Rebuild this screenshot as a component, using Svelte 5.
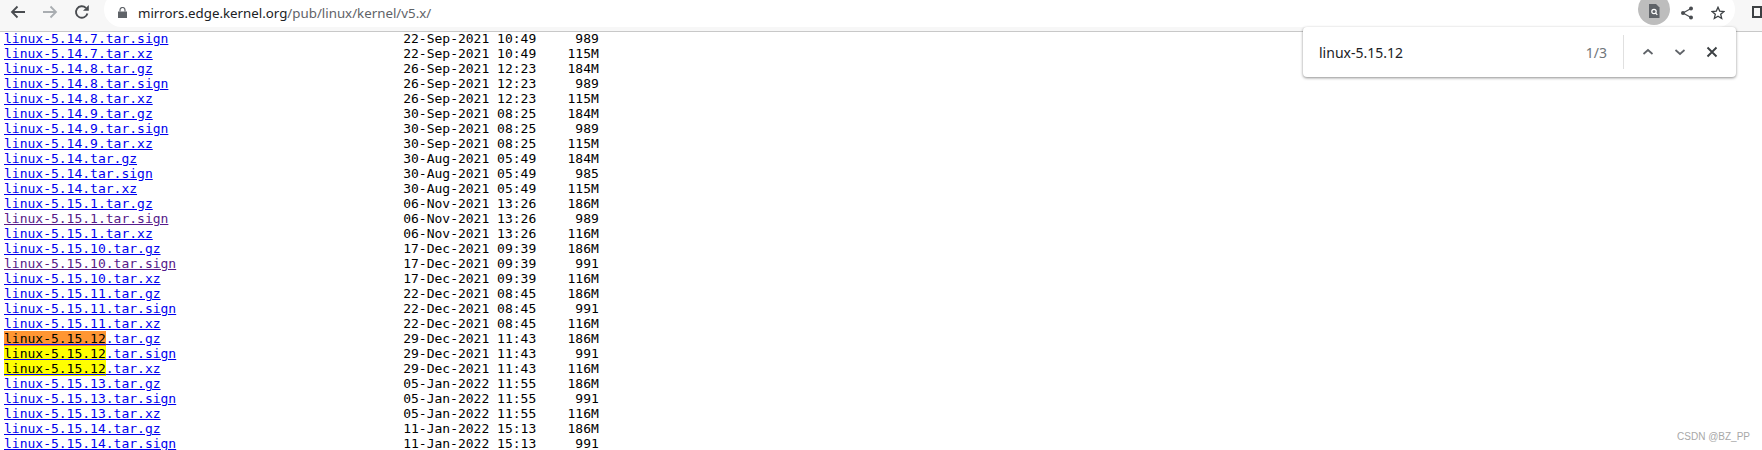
<script>
  // name, date, size — same rows as the nginx index
  const rows = [
    ["linux-5.14.7.tar.sign", "22-Sep-2021 10:49", "989"],
    ["linux-5.14.7.tar.xz", "22-Sep-2021 10:49", "115M"],
    ["linux-5.14.8.tar.gz", "26-Sep-2021 12:23", "184M"],
    ["linux-5.14.8.tar.sign", "26-Sep-2021 12:23", "989"],
    ["linux-5.14.8.tar.xz", "26-Sep-2021 12:23", "115M"],
    ["linux-5.14.9.tar.gz", "30-Sep-2021 08:25", "184M"],
    ["linux-5.14.9.tar.sign", "30-Sep-2021 08:25", "989"],
    ["linux-5.14.9.tar.xz", "30-Sep-2021 08:25", "115M"],
    ["linux-5.14.tar.gz", "30-Aug-2021 05:49", "184M"],
    ["linux-5.14.tar.sign", "30-Aug-2021 05:49", "985"],
    ["linux-5.14.tar.xz", "30-Aug-2021 05:49", "115M"],
    ["linux-5.15.1.tar.gz", "06-Nov-2021 13:26", "186M"],
    ["linux-5.15.1.tar.sign", "06-Nov-2021 13:26", "989"],
    ["linux-5.15.1.tar.xz", "06-Nov-2021 13:26", "116M"],
    ["linux-5.15.10.tar.gz", "17-Dec-2021 09:39", "186M"],
    ["linux-5.15.10.tar.sign", "17-Dec-2021 09:39", "991"],
    ["linux-5.15.10.tar.xz", "17-Dec-2021 09:39", "116M"],
    ["linux-5.15.11.tar.gz", "22-Dec-2021 08:45", "186M"],
    ["linux-5.15.11.tar.sign", "22-Dec-2021 08:45", "991"],
    ["linux-5.15.11.tar.xz", "22-Dec-2021 08:45", "116M"],
    ["linux-5.15.12.tar.gz", "29-Dec-2021 11:43", "186M"],
    ["linux-5.15.12.tar.sign", "29-Dec-2021 11:43", "991"],
    ["linux-5.15.12.tar.xz", "29-Dec-2021 11:43", "116M"],
    ["linux-5.15.13.tar.gz", "05-Jan-2022 11:55", "186M"],
    ["linux-5.15.13.tar.sign", "05-Jan-2022 11:55", "991"],
    ["linux-5.15.13.tar.xz", "05-Jan-2022 11:55", "116M"],
    ["linux-5.15.14.tar.gz", "11-Jan-2022 15:13", "186M"],
    ["linux-5.15.14.tar.sign", "11-Jan-2022 15:13", "991"],
  ];
  const query = "linux-5.15.12";
  const visited = ["linux-5.15.1.tar.sign", "linux-5.15.10.tar.sign"];
  let hitCount = 0;
  function hitIndex(name) {
    return name.startsWith(query) ? hitCount++ : -1;
  }
</script>

<div class="page">
  <header class="toolbar">
    <div class="nav">
      <svg class="icon" viewBox="0 0 16 16"><path d="M15 8H2.500M7.500 2.500 2 8l5.500 5.500" fill="none" stroke="#494c50" stroke-width="1.800"/></svg>
      <svg class="icon" viewBox="0 0 16 16"><path d="M1 8h12.500M8.500 2.500 14 8l-5.500 5.500" fill="none" stroke="#a9adb1" stroke-width="1.800"/></svg>
      <svg class="icon" viewBox="0 0 16 16"><path d="M13.400 9.500a5.800 5.800 0 1 1-1.500-5.600" fill="none" stroke="#494c50" stroke-width="1.900"/><path d="M14.800 1V6.800H9Z" fill="#494c50"/></svg>
    </div>
    <div class="omnibox">
      <svg class="lock" viewBox="0 0 9 11"><path d="M0 4.500h9V11H0Z" fill="#5f6368"/><path d="M2 4.500V3a2.500 2.500 0 0 1 5 0v1.500" fill="none" stroke="#5f6368" stroke-width="1.200"/></svg>
      <span class="url">mirrors.edge.kernel.org<span class="path">/pub/linux/kernel/v5.x/</span></span>
      <div class="actions">
        <span class="find-pill">
          <svg viewBox="0 0 12 14" width="12" height="14"><path d="M1 0h7l3.500 3.500V14H1Z" fill="#5f6368"/><circle cx="6" cy="7.500" r="2.200" fill="none" stroke="#fff" stroke-width="1.200"/><path d="m7.500 9 1.800 1.800" stroke="#fff" stroke-width="1.200"/></svg>
        </span>
        <svg class="action" viewBox="0 0 14 14"><path d="M11 2.500 3 7l8 4.500" fill="none" stroke="#494c50" stroke-width="1.200"/><circle cx="11" cy="2.500" r="2" fill="#494c50"/><circle cx="3" cy="7" r="2" fill="#494c50"/><circle cx="11" cy="11.500" r="2" fill="#494c50"/></svg>
        <svg class="action star" viewBox="0 0 14 14"><path d="m7 1.300 1.700 3.800 4.200.400-3.200 2.800 1 4.200L7 10.300l-3.700 2.200 1-4.200-3.200-2.800 4.200-.400Z" fill="none" stroke="#3c4043" stroke-width="1.300"/></svg>
      </div>
    </div>
    <div class="window-btn"></div>
  </header>

  <pre class="listing">{#each rows as [name, date, size]}{@const hit = hitIndex(name)}<a href="#top" class:visited={visited.includes(name)}>{#if hit >= 0}<mark class:current={hit === 0}>{query}</mark>{name.slice(query.length)}{:else}{name}{/if}</a>{" ".repeat(51 - name.length)}{date}{size.padStart(8)}{"\n"}{/each}</pre>

  <div class="findbar">
    <span class="query">{query}</span>
    <span class="count">1/3</span>
    <span class="divider"></span>
    <div class="find-btns">
      <svg class="find-btn" viewBox="0 0 12 12"><path d="m1.500 8 4.500-4 4.500 4" fill="none" stroke="#5f6368" stroke-width="1.700"/></svg>
      <svg class="find-btn" viewBox="0 0 12 12"><path d="m1.500 4 4.500 4 4.500-4" fill="none" stroke="#5f6368" stroke-width="1.700"/></svg>
      <svg class="find-btn" viewBox="0 0 12 12"><path d="m1.500 1.500 9 9m0-9-9 9" fill="none" stroke="#3c4043" stroke-width="1.900"/></svg>
    </div>
  </div>

  <div class="watermark">CSDN @BZ_PP</div>
</div>

<style>
  :global(body) {
    margin: 0;
    background: #fff;
  }

  .page {
    position: relative;
    height: 450px;
    overflow: hidden;
  }

  .toolbar {
    position: relative;
    z-index: 1;
    display: flex;
    align-items: flex-start;
    height: 31px;
    background: #f7f7f7;
    border-bottom: 1px solid #c8c8c8;
    overflow: hidden;
  }

  .nav {
    display: flex;
    gap: 16px;
    padding: 4px 0 0 10px;
    width: 94px;
    flex: none;
    box-sizing: border-box;
  }

  .icon {
    width: 16px;
    height: 16px;
  }

  .omnibox {
    flex: 1;
    display: flex;
    align-items: center;
    box-sizing: border-box;
    height: 35px;
    margin: -8px 0 0 10px;
    padding: 6px 10px 0 14px;
    background: #fff;
    border-radius: 18px;
  }

  .lock {
    width: 9px;
    height: 11px;
  }

  .url {
    margin-left: 11px;
    font: 13.3px/16px "Noto Sans", sans-serif;
    color: #202124;
  }

  .path {
    color: #5f6368;
  }

  .actions {
    margin-left: auto;
    display: flex;
    align-items: center;
    gap: 10px;
  }

  .find-pill {
    width: 32px;
    height: 32px;
    margin-top: -7px;
    padding-bottom: 7px;
    box-sizing: border-box;
    border-radius: 16px;
    background: #bdbdbd;
    display: flex;
    align-items: flex-end;
    justify-content: center;
  }

  .action {
    width: 14px;
    height: 14px;
  }

  .star {
    margin-left: 7px;
  }

  .window-btn {
    flex: none;
    box-sizing: border-box;
    width: 10px;
    height: 12px;
    border: 2px solid #3c4043;
    margin: 6px 0 0 17px;
  }

  .listing {
    margin: -1px 0 0;
    padding: 0 0 0 4px;
    font: 13px/15px "DejaVu Sans Mono", monospace;
    color: #000;
  }

  a {
    color: #0000ee;
  }

  a.visited {
    color: #551a8b;
  }

  mark {
    background: #ffff00;
    color: #000;
  }

  mark.current {
    background: #ff9632;
  }

  .findbar {
    position: absolute;
    z-index: 2;
    top: 27px;
    left: 1303px;
    width: 433px;
    height: 50px;
    padding-right: 18px;
    box-sizing: border-box;
    background: #fff;
    border-radius: 4px;
    box-shadow: 0 1px 3px rgba(0, 0, 0, 0.45);
    display: flex;
    align-items: center;
    font: 14px "Noto Sans", sans-serif;
  }

  .query {
    margin-left: 16px;
    color: #202124;
  }

  .count {
    margin-left: auto;
    color: #70757a;
  }

  .divider {
    width: 1px;
    height: 34px;
    background: #e0e0e0;
    margin: 0 18px 0 16px;
  }

  .find-btns {
    display: flex;
    gap: 20px;
  }

  .find-btn {
    width: 12px;
    height: 12px;
  }

  .watermark {
    position: absolute;
    right: 12px;
    bottom: 7px;
    font: 10px/12px "Liberation Sans", sans-serif;
    color: #a8a8a8;
  }
</style>
